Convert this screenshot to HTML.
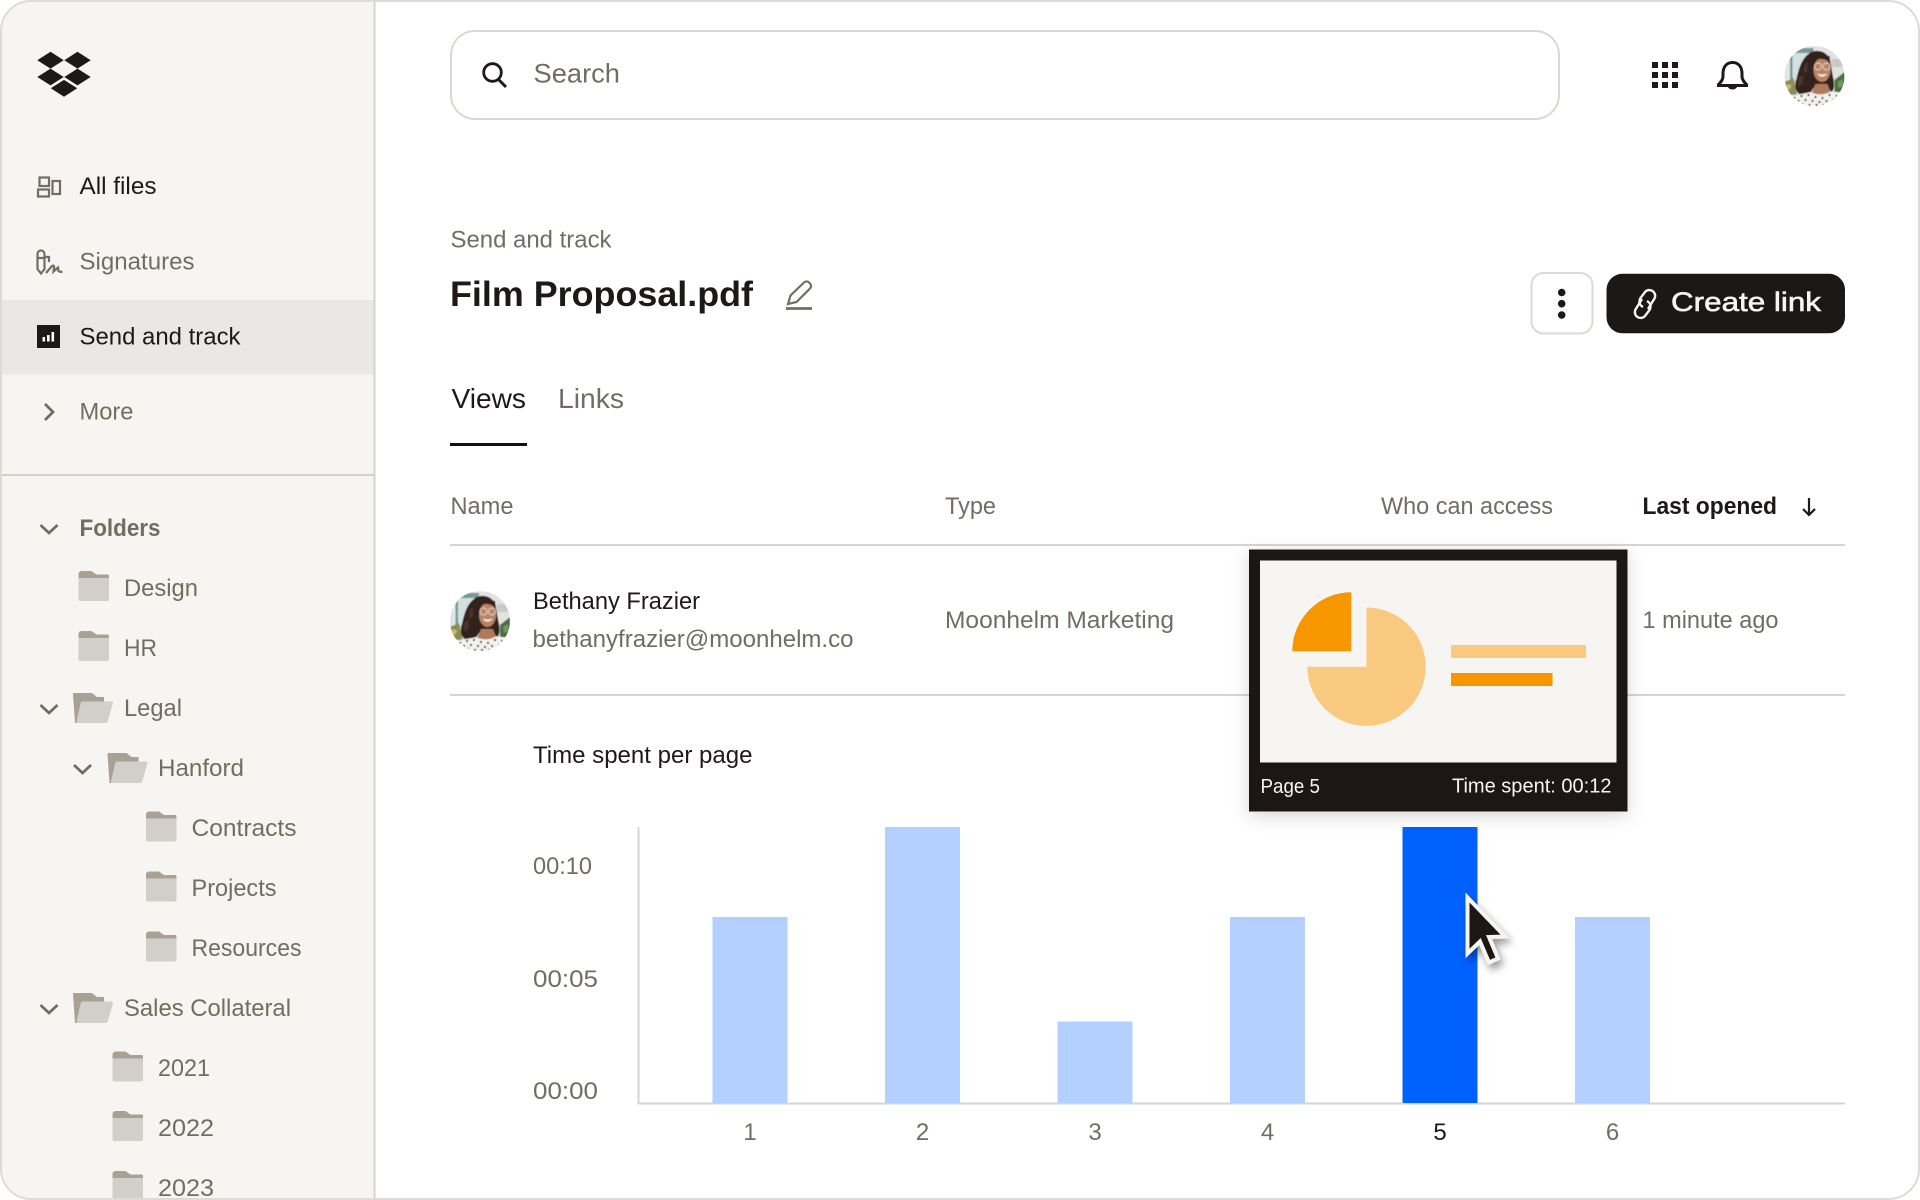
<!DOCTYPE html>
<html lang="en">
<head>
<meta charset="utf-8">
<title>Film Proposal.pdf</title>
<style>
html,body{margin:0;padding:0;background:#fff;width:1920px;height:1200px;overflow:hidden}
svg{display:block;filter:blur(.3px)}
text{font-family:"Liberation Sans",sans-serif;font-size:24px;fill:#736c64}
.d{fill:#1e1919}
.b{font-weight:700}
.ic{fill:none;stroke:#736c64;stroke-width:2.2}
.ch{fill:none;stroke:#736c64;stroke-width:2.8}
.k{fill:none;stroke:#1e1919}
</style>
</head>
<body>
<svg width="1920" height="1200" viewBox="0 0 1920 1200" xmlns="http://www.w3.org/2000/svg">
<defs>
  <clipPath id="frame"><rect x="2" y="2" width="1916" height="1196" rx="30"/></clipPath>
  <clipPath id="ac"><circle cx="30" cy="30" r="30"/></clipPath>
  <filter id="sh" x="-20%" y="-20%" width="140%" height="140%"><feDropShadow dx="0" dy="4" stdDeviation="9" flood-color="#000" flood-opacity=".16"/></filter>
  <filter id="csh" x="-50%" y="-50%" width="200%" height="200%"><feDropShadow dx="3" dy="5" stdDeviation="4" flood-color="#000" flood-opacity=".4"/></filter>
  <filter id="soft" x="-10%" y="-10%" width="120%" height="120%"><feGaussianBlur stdDeviation=".6"/></filter>
  <g id="avatar">
    <g clip-path="url(#ac)"><g filter="url(#soft)">
      <rect width="60" height="60" fill="#e2e3e1"/>
      <rect x="3" y="2" width="26" height="34" fill="#7a9897"/>
      <rect x="8" y="7" width="20" height="28" fill="#d2e0df"/>
      <rect x="3" y="11" width="2.500" height="25" fill="#dfe8e7"/>
      <rect x="47" y="13" width="11" height="8" fill="#c9c9c7"/>
      <path d="M0 36 L9 32 L13 50 L0 50Z" fill="#8c8d55"/>
      <path d="M2 38 l5 1 -2 5 -3-1z" fill="#c9bd70"/>
      <path d="M50 34 L60 26 L60 50 L50 50Z" fill="#47703f"/>
      <path d="M53 36 l5-3 1 7 -5 2z" fill="#75995a"/>
      <path d="M24 8 C29 3 40 4 44 11 C47 17 47 25 49 33 C50 39 50 44 47 46 L41 40 L29 42 L24 50 L16 49 C10 45 10 39 12 33 C14 25 16 14 24 8Z" fill="#33231c"/>
      <path d="M14 32 l4-3 1 8 -5 4z M20 19 l3-3 0 9 -4 3z" fill="#4c362b"/>
      <path d="M31 38 L43 38 L47 49 L26 50Z" fill="#b07a5a"/>
      <ellipse cx="37.500" cy="24" rx="8.500" ry="12" fill="#bb8363"/>
      <path d="M29 15 C33 12 42 12 46 17 L45 10 L33 8Z" fill="#33231c"/>
      <circle cx="33.500" cy="20.500" r="3.500" fill="none" stroke="#e4d6ca" stroke-width=".9"/>
      <circle cx="42" cy="20.500" r="3.500" fill="none" stroke="#e4d6ca" stroke-width=".9"/>
      <path d="M32.500 27.500 Q37.500 34 43 27.500 Q37.500 29.500 32.500 27.500Z" fill="#f8f0ea"/>
      <path d="M0 49 L8 49 Q18 48 26 46 Q36 51 46 45.500 Q54 46 60 47 L60 60 L0 60Z" fill="#f3f2ef"/>
      <g fill="#2a2626">
        <circle cx="10" cy="52" r="1.100"/><circle cx="17" cy="50" r="1.100"/><circle cx="24" cy="49" r="1.100"/><circle cx="31" cy="51" r="1.100"/><circle cx="38" cy="52" r="1.100"/><circle cx="45" cy="49" r="1.100"/><circle cx="52" cy="50" r="1.100"/>
        <circle cx="14" cy="55" r="1.100"/><circle cx="21" cy="54" r="1.100"/><circle cx="28" cy="55" r="1.100"/><circle cx="35" cy="56" r="1.100"/><circle cx="42" cy="55" r="1.100"/><circle cx="49" cy="54" r="1.100"/>
        <circle cx="18" cy="58" r="1.100"/><circle cx="25" cy="59" r="1.100"/><circle cx="32" cy="59" r="1.100"/><circle cx="39" cy="59" r="1.100"/><circle cx="46" cy="58" r="1.100"/>
      </g>
    </g></g>
  </g>
  <g id="fc">
    <path d="M0 3 a3 3 0 0 1 3-3 h10 l5 3.500 h11 a1.500 1.500 0 0 1 1.500 1.500 v6 h-30.500z" fill="#a9a196"/>
    <path d="M0 7 h30.500 v21 a2 2 0 0 1-2 2 h-26.500 a2 2 0 0 1-2-2z" fill="#d2cec9"/>
  </g>
  <g id="fo">
    <path d="M0 1 a1 1 0 0 1 1-1 h18 l5 4 h7 v5 h-20 l-3 3 -4 18 -2 0z" fill="#a9a196"/>
    <path d="M9 8.500 h30 a1 1 0 0 1 1 1.300 l-5 18 a3 3 0 0 1-3 2.200 h-27 a1.500 1.500 0 0 1-1.500-1.800 l4-17.500 a3 3 0 0 1 1.500-2.200z" fill="#d2cec9"/>
  </g>
</defs>

<rect x="1" y="1" width="1918" height="1198" rx="30" fill="#fff" stroke="#dedbd6" stroke-width="2"/>

<g clip-path="url(#frame)">
  <!-- Sidebar -->
  <rect x="0" y="0" width="373.500" height="1200" fill="#f7f5f2"/>
  <rect x="373.500" y="0" width="2" height="1200" fill="#d6d3ce"/>
  <rect x="0" y="300" width="373.500" height="74.500" fill="#eae8e4"/>
  <rect x="0" y="474" width="373.500" height="2" fill="#d3d0cb"/>

  <!-- Logo -->
  <g fill="#1e1919">
    <polygon points="37.300,60.200 50.500,51.800 63.700,60.200 50.500,68.600"/>
    <polygon points="64.300,60.200 77.500,51.800 90.700,60.200 77.500,68.600"/>
    <polygon points="37.300,77 50.500,68.600 63.700,77 50.500,85.400"/>
    <polygon points="64.300,77 77.500,68.600 90.700,77 77.500,85.400"/>
    <polygon points="50.800,88.300 64,79.900 77.200,88.300 64,96.700" stroke="#f7f5f2" stroke-width="1.500" paint-order="stroke"/>
  </g>

  <!-- Nav icons -->
  <g class="ic">
    <rect x="39.500" y="177.500" width="9.500" height="8.500"/>
    <rect x="38" y="189.500" width="11" height="7"/>
    <rect x="52.500" y="181" width="7.500" height="13"/>
    <path d="M37.500 269 V254 a3.500 3.500 0 0 1 7 0 V269 L41 273.500Z M37.500 258 H44.500 M44.500 257 H49 V262"/>
    <path d="M46 273 L52 266 Q54.500 264.500 54 268 L53.500 271.500 L58 267.500 L58.500 271 Q60 272.500 62.500 271.500"/>
  </g>
  <rect x="37" y="325" width="23" height="23" fill="#1e1919"/>
  <g fill="#fff">
    <rect x="42.500" y="337" width="2.600" height="4.500"/>
    <rect x="47" y="335" width="2.600" height="6.500"/>
    <rect x="51.500" y="332" width="2.600" height="9.500"/>
  </g>
  <path class="ch" d="M45 404 L53 412 L45 420"/>

  <text x="79.500" y="194" class="d" textLength="77" lengthAdjust="spacingAndGlyphs">All files</text>
  <text x="79.500" y="269.500" textLength="115" lengthAdjust="spacingAndGlyphs">Signatures</text>
  <text x="79.500" y="344.500" class="d" textLength="161" lengthAdjust="spacingAndGlyphs">Send and track</text>
  <text x="79.500" y="419.500" textLength="54" lengthAdjust="spacingAndGlyphs">More</text>

  <!-- Folder tree -->
  <path class="ch" d="M40.500 525 L49 533 L57.500 525"/>
  <path class="ch" d="M40.500 705 L49 713 L57.500 705"/>
  <path class="ch" d="M74 765 L82.500 773 L91 765"/>
  <path class="ch" d="M40.500 1005 L49 1013 L57.500 1005"/>

  <use href="#fc" x="78.500" y="571"/>
  <use href="#fc" x="78.500" y="631"/>
  <use href="#fo" x="73" y="693"/>
  <use href="#fo" x="107.500" y="753"/>
  <use href="#fc" x="146" y="811.500"/>
  <use href="#fc" x="146" y="871.500"/>
  <use href="#fc" x="146" y="931.500"/>
  <use href="#fo" x="73" y="993"/>
  <use href="#fc" x="112.500" y="1051.500"/>
  <use href="#fc" x="112.500" y="1111"/>
  <use href="#fc" x="112.500" y="1171"/>

  <text x="79.500" y="536" class="b" textLength="81" lengthAdjust="spacingAndGlyphs">Folders</text>
  <text x="124" y="596" textLength="74" lengthAdjust="spacingAndGlyphs">Design</text>
  <text x="124" y="656" textLength="33" lengthAdjust="spacingAndGlyphs">HR</text>
  <text x="124" y="716" textLength="58" lengthAdjust="spacingAndGlyphs">Legal</text>
  <text x="158" y="776" textLength="86" lengthAdjust="spacingAndGlyphs">Hanford</text>
  <text x="191.500" y="836" textLength="105" lengthAdjust="spacingAndGlyphs">Contracts</text>
  <text x="191.500" y="896" textLength="85" lengthAdjust="spacingAndGlyphs">Projects</text>
  <text x="191.500" y="956" textLength="110" lengthAdjust="spacingAndGlyphs">Resources</text>
  <text x="124" y="1016" textLength="167" lengthAdjust="spacingAndGlyphs">Sales Collateral</text>
  <text x="158" y="1076" textLength="52" lengthAdjust="spacingAndGlyphs">2021</text>
  <text x="158" y="1136" textLength="56" lengthAdjust="spacingAndGlyphs">2022</text>
  <text x="158" y="1196" textLength="56" lengthAdjust="spacingAndGlyphs">2023</text>

  <!-- Search -->
  <rect x="451" y="31" width="1108" height="88" rx="24" fill="#fff" stroke="#dbd8d3" stroke-width="2"/>
  <circle cx="492.500" cy="72.500" r="8.800" class="k" stroke-width="2.800"/>
  <path d="M498.500 79.500 L506 87" class="k" stroke-width="3"/>
  <text x="533.500" y="82.500" style="font-size:27px" textLength="86.500" lengthAdjust="spacingAndGlyphs">Search</text>

  <!-- Top right -->
  <g fill="#1e1919">
    <rect x="1652" y="62" width="6" height="6"/><rect x="1662" y="62" width="6" height="6"/><rect x="1672" y="62" width="6" height="6"/>
    <rect x="1652" y="72" width="6" height="6"/><rect x="1662" y="72" width="6" height="6"/><rect x="1672" y="72" width="6" height="6"/>
    <rect x="1652" y="82" width="6" height="6"/><rect x="1662" y="82" width="6" height="6"/><rect x="1672" y="82" width="6" height="6"/>
  </g>
  <path class="k" stroke-width="3" d="M1732.500 62.500 c-6.500 0 -9.500 5 -9.500 11 v3 c0 3.500 -2.500 6 -4.500 8 v1 h28 v-1 c-2 -2 -4.500 -4.500 -4.500 -8 v-3 c0 -6 -3 -11 -9.500 -11z"/>
  <path d="M1727.500 85.500 h10 a5 4 0 0 1 -10 0z" fill="#1e1919"/>
  <use href="#avatar" transform="translate(1784.500 46)"/>

  <!-- Heading -->
  <text x="450.500" y="247.500" textLength="161" lengthAdjust="spacingAndGlyphs">Send and track</text>
  <text x="450" y="306" class="d b" style="font-size:35px" textLength="303" lengthAdjust="spacingAndGlyphs">Film Proposal.pdf</text>
  <path class="ic" d="M788 304 l2.500-8.500 L804 282.500 a3.500 3.500 0 0 1 5 0 l1 1 a3.500 3.500 0 0 1 0 5 L796.500 302z"/>
  <path d="M786 308.500 H812" stroke="#736c64" stroke-width="2.800" fill="none"/>

  <!-- Buttons -->
  <rect x="1531.500" y="273" width="61" height="60.500" rx="12" fill="#fff" stroke="#dcdad5" stroke-width="2"/>
  <g fill="#1e1919"><circle cx="1561.700" cy="292.500" r="3.800"/><circle cx="1561.700" cy="303.700" r="3.800"/><circle cx="1561.700" cy="315" r="3.800"/></g>
  <rect x="1606.500" y="273.800" width="238.500" height="59.500" rx="16" fill="#1a1918"/>
  <g fill="none" stroke="#f7f5f2" stroke-width="2.400">
    <path d="M1648 309 L1654.500 298.500 A5.800 5.800 0 0 0 1645 292 L1640.500 298 C1638.500 301.500 1639.500 305 1643 307"/>
    <path d="M1642 299 L1635.500 309.500 A5.800 5.800 0 0 0 1645 316 L1649.500 310 C1651.500 306.500 1650.500 303 1647 301"/>
  </g>
  <text x="1671" y="311" style="font-size:27px;fill:#f7f5f2;stroke:#f7f5f2;stroke-width:.6" textLength="150" lengthAdjust="spacingAndGlyphs">Create link</text>

  <!-- Tabs -->
  <text x="451.500" y="408" class="d" style="font-size:28px" textLength="74.500" lengthAdjust="spacingAndGlyphs">Views</text>
  <text x="558" y="408" style="font-size:28px" textLength="66" lengthAdjust="spacingAndGlyphs">Links</text>
  <rect x="450" y="443" width="77" height="3" fill="#111"/>

  <!-- Table -->
  <text x="450.500" y="514" textLength="63" lengthAdjust="spacingAndGlyphs">Name</text>
  <text x="945" y="514" textLength="51" lengthAdjust="spacingAndGlyphs">Type</text>
  <text x="1381" y="514" textLength="172" lengthAdjust="spacingAndGlyphs">Who can access</text>
  <text x="1642.500" y="514" class="d b" textLength="134.500" lengthAdjust="spacingAndGlyphs">Last opened</text>
  <path d="M1809 498 V515 M1803 509 L1809 515 L1815 509" class="k" stroke-width="2.200"/>
  <rect x="450" y="544" width="1395" height="2" fill="#d8d5d0"/>

  <use href="#avatar" transform="translate(450 591)"/>
  <text x="533" y="609" class="d" textLength="167" lengthAdjust="spacingAndGlyphs">Bethany Frazier</text>
  <text x="532.500" y="647" textLength="321" lengthAdjust="spacingAndGlyphs">bethanyfrazier@moonhelm.co</text>
  <text x="945" y="628" textLength="229" lengthAdjust="spacingAndGlyphs">Moonhelm Marketing</text>
  <text x="1642.500" y="628" textLength="136" lengthAdjust="spacingAndGlyphs">1 minute ago</text>
  <rect x="450" y="694" width="1395" height="2" fill="#d8d5d0"/>

  <!-- Chart -->
  <text x="533" y="763" class="d" textLength="219.500" lengthAdjust="spacingAndGlyphs">Time spent per page</text>
  <text x="533" y="874" textLength="59" lengthAdjust="spacingAndGlyphs">00:10</text>
  <text x="533" y="987" textLength="65" lengthAdjust="spacingAndGlyphs">00:05</text>
  <text x="533" y="1099" textLength="65" lengthAdjust="spacingAndGlyphs">00:00</text>

  <rect x="637.500" y="827" width="2" height="277" fill="#d8d5d0"/>
  <rect x="638" y="1102.500" width="1207" height="2" fill="#d8d5d0"/>
  <g fill="#b4d0fe">
    <rect x="712.500" y="917" width="75" height="186"/>
    <rect x="885" y="827" width="75" height="276"/>
    <rect x="1057.500" y="1021.500" width="75" height="81.500"/>
    <rect x="1230" y="917" width="75" height="186"/>
    <rect x="1575" y="917" width="75" height="186"/>
  </g>
  <rect x="1402.500" y="827" width="75" height="276" fill="#0061fe"/>

  <g text-anchor="middle">
    <text x="750" y="1140">1</text>
    <text x="922.500" y="1140">2</text>
    <text x="1095" y="1140">3</text>
    <text x="1267.500" y="1140">4</text>
    <text x="1440" y="1140" class="d">5</text>
    <text x="1612.500" y="1140">6</text>
  </g>

  <!-- Tooltip -->
  <rect x="1249" y="549.500" width="378.500" height="262" fill="#1a1918" filter="url(#sh)"/>
  <rect x="1260" y="560.500" width="356.500" height="202" fill="#f7f5f2"/>
  <path d="M1366.500 607.500 A59.200 59.200 0 1 1 1307.300 666.700 H1366.500Z" fill="#f8c97e"/>
  <path d="M1351.300 592.300 V651.300 H1292.300 A59 59 0 0 1 1351.300 592.300Z" fill="#f79700"/>
  <rect x="1451" y="645" width="135" height="13" fill="#f8c97e"/>
  <rect x="1451" y="673" width="101.500" height="13" fill="#f79700"/>
  <text x="1260.500" y="793" style="font-size:20px;fill:#f7f5f2" textLength="59.500" lengthAdjust="spacingAndGlyphs">Page 5</text>
  <text x="1452" y="792.500" style="font-size:20px;fill:#f7f5f2" textLength="159.500" lengthAdjust="spacingAndGlyphs">Time spent: 00:12</text>

  <!-- Cursor -->
  <polygon points="1467.500,897.500 1505,936.500 1489,937 1498,958.500 1489,962.500 1480,941.500 1467.500,953.500" fill="#1e1919" stroke="#f7f5f2" stroke-width="4" filter="url(#csh)"/>
</g>
</svg>
</body>
</html>
